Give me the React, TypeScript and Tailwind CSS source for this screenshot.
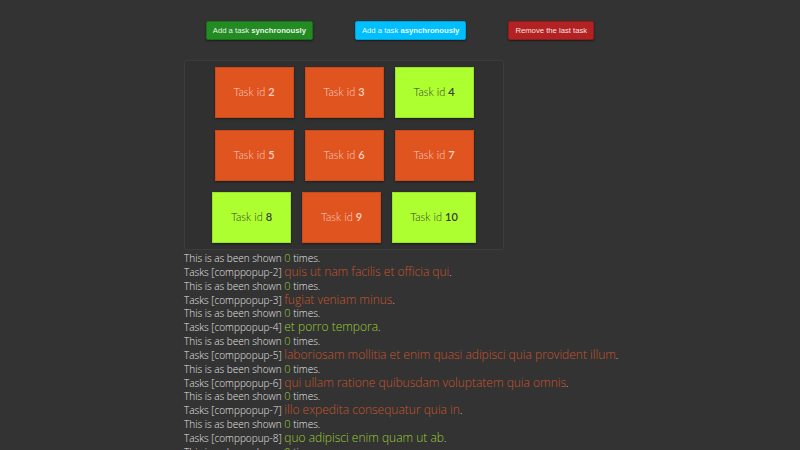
import React from "react";

type Task = { id: number; green: boolean; text: string };

const tasks: Task[] = [
  { id: 2, green: false, text: "quis ut nam facilis et officia qui" },
  { id: 3, green: false, text: "fugiat veniam minus" },
  { id: 4, green: true, text: "et porro tempora" },
  { id: 5, green: false, text: "laboriosam mollitia et enim quasi adipisci quia provident illum" },
  { id: 6, green: false, text: "qui ullam ratione quibusdam voluptatem quia omnis" },
  { id: 7, green: false, text: "illo expedita consequatur quia in" },
  { id: 8, green: true, text: "quo adipisci enim quam ut ab" },
  { id: 9, green: false, text: "sit et harum" },
  { id: 10, green: true, text: "sunt aut facere repellat" },
];

function Tile({ t }: { t: Task }) {
  return (
    <div
      className={
        "h-[51px] flex items-center justify-center border shadow-[0_1px_2px_rgba(0,0,0,0.4)] " +
        (t.id >= 10 ? "w-[84px] " : "w-[79px] ") +
        (t.green
          ? "bg-[#adff2f] border-[#9be02a] text-[#3a3a3a]"
          : "bg-[#e0541f] border-[#c94a1a] text-[#f6d3c2]")
      }
      style={{ fontFamily: "Lato, 'Open Sans', sans-serif" }}
    >
      <span className="text-[11px] font-light">
        Task id <span className="font-semibold">{t.id}</span>
      </span>
    </div>
  );
}

export default function App() {
  const rows = [tasks.slice(0, 3), tasks.slice(3, 6), tasks.slice(6, 9)];
  return (
    <div className="w-[800px] h-[450px] overflow-hidden bg-[#333333]">
      <div
        className="flex justify-center gap-[42px] pt-[21px]"
        style={{ fontFamily: "'Liberation Sans', Arial, sans-serif" }}
      >
        <button className="h-[19px] px-[6px] text-[7.7px] text-[#e8f3e8] bg-[#228b22] border border-[#1a6f1a] rounded-[2px] shadow-[0_1px_2px_rgba(0,0,0,0.5)]">
          Add a task <b>synchronously</b>
        </button>
        <button className="h-[19px] px-[6px] text-[7.7px] text-[#e6f7ff] bg-[#00bfff] border border-[#00a0d8] rounded-[2px] shadow-[0_1px_2px_rgba(0,0,0,0.5)]">
          Add a task <b>asynchronously</b>
        </button>
        <button className="h-[19px] px-[6px] text-[7.7px] text-[#f6e0e0] bg-[#b22222] border border-[#921b1b] rounded-[2px] shadow-[0_1px_2px_rgba(0,0,0,0.5)]">
          Remove the last task
        </button>
      </div>

      <div className="ml-[184px] w-[320px] mt-[20px] border border-[#3c3c3c] bg-[#303030] rounded-[2px] py-[6px] flex flex-col gap-[11.5px]">
        {rows.map((r, i) => (
          <div key={i} className="flex justify-center gap-[11px]">
            {r.map((t) => (
              <Tile key={t.id} t={t} />
            ))}
          </div>
        ))}
      </div>

      <div
        className="ml-[184px] pt-[1px] text-[10px] font-light text-[#e2e2e2] whitespace-nowrap"
        style={{ fontFamily: "'Open Sans', sans-serif" }}
      >
        {tasks.map((t) => (
          <React.Fragment key={t.id}>
            <div className="h-[13.85px] leading-[13.85px]">
              This is as been shown{" "}
              <span className="text-[#9acd32] text-[11px] leading-[13.85px]">0</span> times.
            </div>
            <div className="h-[13.85px] leading-[13.85px]">
              Tasks [comppopup-{t.id}]{" "}
              <span
                className="text-[12px] leading-[13.85px]"
                style={{ color: t.green ? "#9acd32" : "#c9532a" }}
              >
                {t.text}
              </span>
              .
            </div>
          </React.Fragment>
        ))}
      </div>
    </div>
  );
}
